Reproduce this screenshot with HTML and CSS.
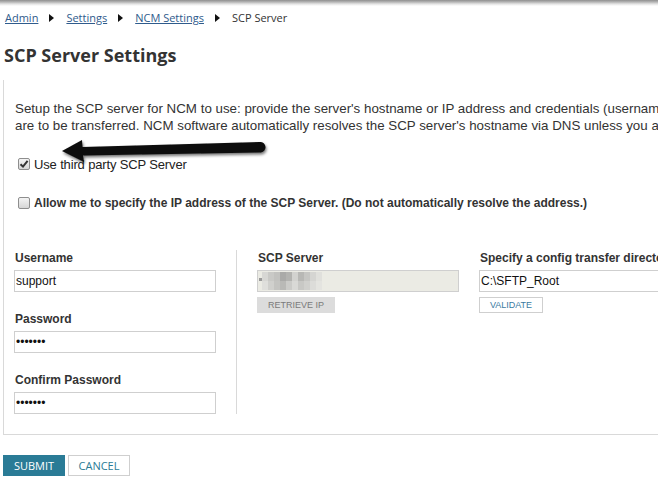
FILE: index.html
```html
<!DOCTYPE html>
<html>
<head>
<meta charset="utf-8">
<link rel="stylesheet" href="styles.css">
</head>
<body>
<div class="top-shadow"></div>
<nav class="breadcrumb">
  <a href="#">Admin</a><span class="sep"></span><a href="#">Settings</a><span class="sep"></span><a href="#">NCM Settings</a><span class="sep"></span><span class="current">SCP Server</span>
</nav>
<h1 class="title">SCP Server Settings</h1>

<section class="panel">
  <div class="desc">
    <div class="desc-line">Setup the SCP server for NCM to use: provide the server's hostname or IP address and credentials (username and password) and specify the directory where files</div>
    <div class="desc-line">are to be transferred. NCM software automatically resolves the SCP server's hostname via DNS unless you allow it to be specified manually.</div>
  </div>

  <label class="check-row first">
    <span class="cbox checked"><svg viewBox="0 0 12 12" width="12" height="12"><path d="M2.5 6.2 L5 8.6 L9.6 2.8" fill="none" stroke="#333" stroke-width="2"/></svg></span>
    <span class="check-label">Use third party SCP Server</span>
  </label>

  <label class="check-row second">
    <span class="cbox"></span>
    <span class="check-label bold">Allow me to specify the IP address of the SCP Server. (Do not automatically resolve the address.)</span>
  </label>

  <div class="fields">
    <div class="col">
      <div class="field-label">Username</div>
      <input class="text-input" type="text" value="support">
      <div class="field-label spaced">Password</div>
      <input class="text-input" type="password" value="1234567">
      <div class="field-label spaced">Confirm Password</div>
      <input class="text-input" type="password" value="1234567">
    </div>
    <div class="divider"></div>
    <div class="col">
      <div class="field-label">SCP Server</div>
      <div class="text-input disabled">
        <svg class="blur" width="80" height="18" viewBox="0 0 80 18">
          <rect x="0" y="6" width="3" height="3" fill="#9a9a9a"/>
          <rect x="3" y="0" width="6" height="9" fill="#d7d7d4"/>
          <rect x="9" y="0" width="6" height="9" fill="#c9c9c6"/>
          <rect x="15" y="0" width="6" height="9" fill="#c2c2bf"/>
          <rect x="21" y="0" width="6" height="9" fill="#aaaaa8"/>
          <rect x="27" y="0" width="6" height="9" fill="#b3b3b0"/>
          <rect x="33" y="0" width="6" height="9" fill="#d2d2cf"/>
          <rect x="39" y="0" width="6" height="9" fill="#b8b8b5"/>
          <rect x="45" y="0" width="6" height="9" fill="#c6c6c3"/>
          <rect x="51" y="0" width="6" height="9" fill="#d5d5d2"/>
          <rect x="57" y="0" width="6" height="9" fill="#e0e0dc"/>
          <rect x="3" y="9" width="6" height="9" fill="#dfdfdc"/>
          <rect x="9" y="9" width="6" height="9" fill="#d0d0cd"/>
          <rect x="15" y="9" width="6" height="9" fill="#c4c4c1"/>
          <rect x="21" y="9" width="6" height="9" fill="#b9b9b6"/>
          <rect x="27" y="9" width="6" height="9" fill="#cbcbc8"/>
          <rect x="33" y="9" width="6" height="9" fill="#d9d9d6"/>
          <rect x="39" y="9" width="6" height="9" fill="#c8c8c5"/>
          <rect x="45" y="9" width="6" height="9" fill="#d0d0cd"/>
          <rect x="51" y="9" width="6" height="9" fill="#dcdcd9"/>
          <rect x="57" y="9" width="6" height="9" fill="#e4e4e0"/>
        </svg>
      </div>
      <button class="small-btn grey" type="button">RETRIEVE IP</button>
    </div>
    <div class="col wide">
      <div class="field-label">Specify a config transfer directory</div>
      <input class="text-input full" type="text" value="C:\SFTP_Root">
      <button class="small-btn outline" type="button">VALIDATE</button>
    </div>
  </div>
</section>

<div class="actions">
  <button class="btn primary" type="button">SUBMIT</button>
  <button class="btn secondary" type="button">CANCEL</button>
</div>

<svg class="annot-arrow" width="270" height="40" viewBox="0 0 270 40">
  <defs>
    <filter id="sh" x="-10%" y="-50%" width="120%" height="200%">
      <feGaussianBlur in="SourceAlpha" stdDeviation="1.6"/>
      <feOffset dx="1" dy="2" result="b"/>
      <feComponentTransfer><feFuncA type="linear" slope="0.55"/></feComponentTransfer>
      <feMerge><feMergeNode/><feMergeNode in="SourceGraphic"/></feMerge>
    </filter>
  </defs>
  <path d="M42 21 L62 10 L62.5 17 L240 12 A5 5 0 0 1 240.5 22.5 L63 25.5 L64 32 Z" fill="#0e0e0e" filter="url(#sh)"/>
</svg>
</body>
</html>
```

FILE: styles.css
```css
html, body {
  margin: 0;
  padding: 0;
  background: #fff;
  overflow: hidden;
}
body {
  width: 658px;
  height: 486px;
  position: relative;
  font-family: "Liberation Sans", Arial, sans-serif;
  color: #333;
}
.top-shadow {
  height: 6px;
  background: linear-gradient(#8f8f8f 0, #b5b5b5 2px, #e4e4e4 4px, #fff 6px);
}
.breadcrumb {
  margin-top: 4px;
  padding-left: 5px;
  height: 16px;
  line-height: 16px;
  font-family: "Open Sans", sans-serif;
  font-size: 11px;
  display: flex;
  align-items: center;
  white-space: nowrap;
}
.breadcrumb a {
  color: #2f5b8c;
  text-decoration: underline;
}
.breadcrumb .current { color: #333; }
.breadcrumb .sep {
  width: 0;
  height: 0;
  border-top: 4px solid transparent;
  border-bottom: 4px solid transparent;
  border-left: 5px solid #111;
  margin: 0 12px 0 11px;
}
.title {
  margin: 17px 0 0 4px;
  font-family: "Open Sans", sans-serif;
  font-size: 18px;
  line-height: 24px;
  font-weight: 700;
  color: #333;
}
.panel {
  margin: 13px 0 0 3px;
  border-left: 1px solid #d9d9d9;
  border-bottom: 1px solid #d9d9d9;
  padding: 20px 0 20px 11px;
  overflow: hidden;
}
.desc {
  font-size: 13.33px;
  line-height: 17px;
  color: #333;
  white-space: nowrap;
}
.check-row {
  display: flex;
  align-items: center;
  gap: 4px;
  height: 16px;
  padding-left: 3px;
  white-space: nowrap;
}
.check-row.first { margin-top: 22px; }
.check-row.second { margin-top: 23px; }
.cbox {
  width: 10px;
  height: 10px;
  border: 1px solid #8e8e8e;
  border-radius: 2px;
  background: linear-gradient(#f4f4f4, #d6d6d6);
  display: block;
  position: relative;
}
.cbox svg {
  position: absolute;
  left: -1px;
  top: -1px;
}
.check-label {
  font-size: 13px;
  letter-spacing: -0.15px;
  color: #222;
}
.check-label.bold {
  font-size: 12px;
  font-weight: 700;
  letter-spacing: 0;
  color: #333;
}
.fields {
  margin: 39px 0 0 -1px;
  display: grid;
  grid-template-columns: 202px 1px 202px 1fr;
  column-gap: 20px;
}
.col { min-width: 0; }
.col.wide { overflow: visible; }
.divider {
  background: #d9d9d9;
}
.field-label {
  font-size: 12px;
  font-weight: 700;
  line-height: 14px;
  padding-left: 1px;
  margin-top: 1px;
  margin-bottom: 5px;
  white-space: nowrap;
  color: #333;
}
.field-label.spaced { margin-top: 20px; }
.text-input {
  display: block;
  box-sizing: border-box;
  width: 202px;
  height: 22px;
  border: 1px solid #cfcfcf;
  padding: 0 0 0 1px;
  margin: 0;
  font-family: "Liberation Sans", Arial, sans-serif;
  font-size: 12px;
  color: #111;
  background: #fff;
  outline: none;
}
.text-input.full { width: 240px; }
.text-input.disabled {
  background: #ebebe4;
  padding: 1px 0 0 1px;
}
.text-input .blur {
  display: block;
  filter: blur(0.6px);
}
.small-btn {
  display: block;
  margin-top: 5px;
  height: 16px;
  padding: 0;
  font-family: "Liberation Sans", Arial, sans-serif;
  font-size: 9px;
  line-height: 14px;
  cursor: pointer;
}
.small-btn.grey {
  width: 78px;
  background: #dcdcdc;
  border: 1px solid #dcdcdc;
  color: #7a7a7a;
}
.small-btn.outline {
  width: 64px;
  background: #fff;
  border: 1px solid #cfcfcf;
  color: #3b7ba1;
}
.actions {
  margin: 20px 0 0 3px;
  display: flex;
  gap: 3px;
}
.btn {
  height: 21px;
  width: 62px;
  padding: 0;
  font-family: "Open Sans", sans-serif;
  font-size: 11px;
  line-height: 19px;
  cursor: pointer;
}
.btn.primary {
  background: #2a7b96;
  border: 1px solid #2a7b96;
  color: #fff;
}
.btn.secondary {
  background: #fff;
  border: 1px solid #cfcfcf;
  color: #2a7b96;
}
.annot-arrow {
  position: absolute;
  left: 20px;
  top: 130px;
  pointer-events: none;
}
```
